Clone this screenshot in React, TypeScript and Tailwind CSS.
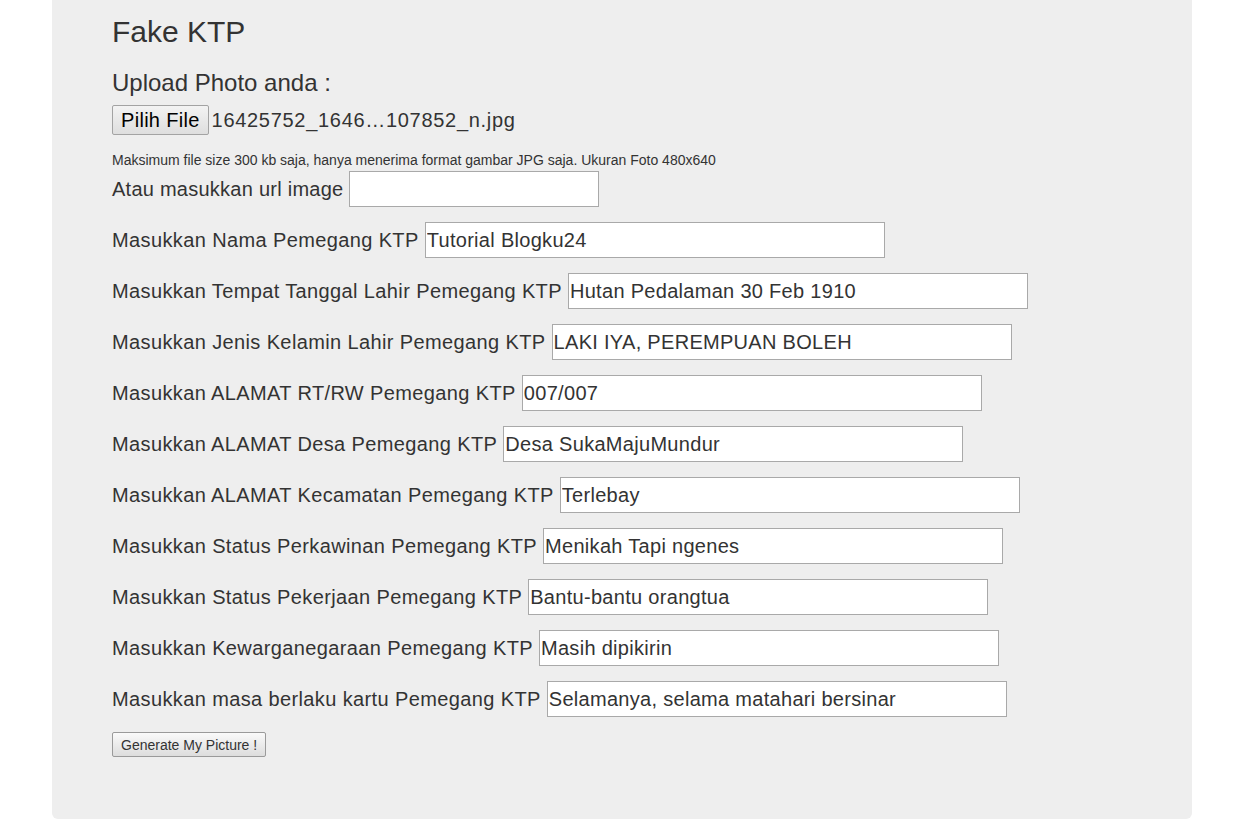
const fields: { label: string; value: string }[] = [
  { label: "Masukkan Nama Pemegang KTP", value: "Tutorial Blogku24" },
  { label: "Masukkan Tempat Tanggal Lahir Pemegang KTP", value: "Hutan Pedalaman 30 Feb 1910" },
  { label: "Masukkan Jenis Kelamin Lahir Pemegang KTP", value: "LAKI IYA, PEREMPUAN BOLEH" },
  { label: "Masukkan ALAMAT RT/RW Pemegang KTP", value: "007/007" },
  { label: "Masukkan ALAMAT Desa Pemegang KTP", value: "Desa SukaMajuMundur" },
  { label: "Masukkan ALAMAT Kecamatan Pemegang KTP", value: "Terlebay" },
  { label: "Masukkan Status Perkawinan Pemegang KTP", value: "Menikah Tapi ngenes" },
  { label: "Masukkan Status Pekerjaan Pemegang KTP", value: "Bantu-bantu orangtua" },
  { label: "Masukkan Kewarganegaraan Pemegang KTP", value: "Masih dipikirin" },
  { label: "Masukkan masa berlaku kartu Pemegang KTP", value: "Selamanya, selama matahari bersinar" },
];

const font = { fontFamily: '"Liberation Sans", Arial, sans-serif' };

function TextField({ value, width }: { value: string; width: string }) {
  return (
    <input
      type="text"
      defaultValue={value}
      className={`${width} h-[36px] border border-[#a9a9a9] bg-white px-[1px] text-[20px] tracking-[0.3px] text-[#333] outline-none`}
      style={font}
    />
  );
}

export default function App() {
  return (
    <div className="min-h-screen bg-white text-[#333]" style={font}>
      <div className="ml-[52px] w-[1140px] rounded-b-[6px] bg-[#eeeeee] pl-[60px] pt-[14px] pb-[62px]">
        <h2 className="text-[30px] leading-[36px] font-normal">Fake KTP</h2>

        <form className="flex flex-col">
          <h4 className="mt-[20px] text-[24px] leading-[26px] font-normal">Upload Photo anda :</h4>

          <div className="mt-[9px] flex items-center gap-[3px]">
            <button
              type="button"
              className="h-[30px] rounded-[2px] border border-[#a3a3a3] bg-gradient-to-b from-[#f3f3f3] to-[#dedede] px-[8px] text-[20px] leading-[28px] tracking-[0.3px] text-black"
              style={font}
            >
              Pilih File
            </button>
            <span className="text-[20px] leading-[28px] tracking-[0.7px]">16425752_1646…107852_n.jpg</span>
          </div>

          <small className="mt-[18px] text-[14px] leading-[15px]">
            Maksimum file size 300 kb saja, hanya menerima format gambar JPG saja. Ukuran Foto 480x640
          </small>

          <div className="mt-[3px] flex items-center gap-[6px]">
            <label className="text-[20px] leading-[23px] tracking-[0.25px]">Atau masukkan url image</label>
            <TextField value="" width="w-[250px]" />
          </div>

          {fields.map((f) => (
            <div key={f.label} className="mt-[15px] flex items-center gap-[6px]">
              <label className="text-[20px] leading-[23px] tracking-[0.38px]">{f.label}</label>
              <TextField value={f.value} width="w-[460px]" />
            </div>
          ))}

          <div className="mt-[15px]">
            <button
              type="button"
              className="h-[25px] rounded-[2px] border border-[#9a9a9a] bg-gradient-to-b from-[#fafafa] to-[#dddddd] px-[8px] text-[14px] leading-[20px] text-[#333]"
              style={font}
            >
              Generate My Picture !
            </button>
          </div>
        </form>
      </div>
    </div>
  );
}
